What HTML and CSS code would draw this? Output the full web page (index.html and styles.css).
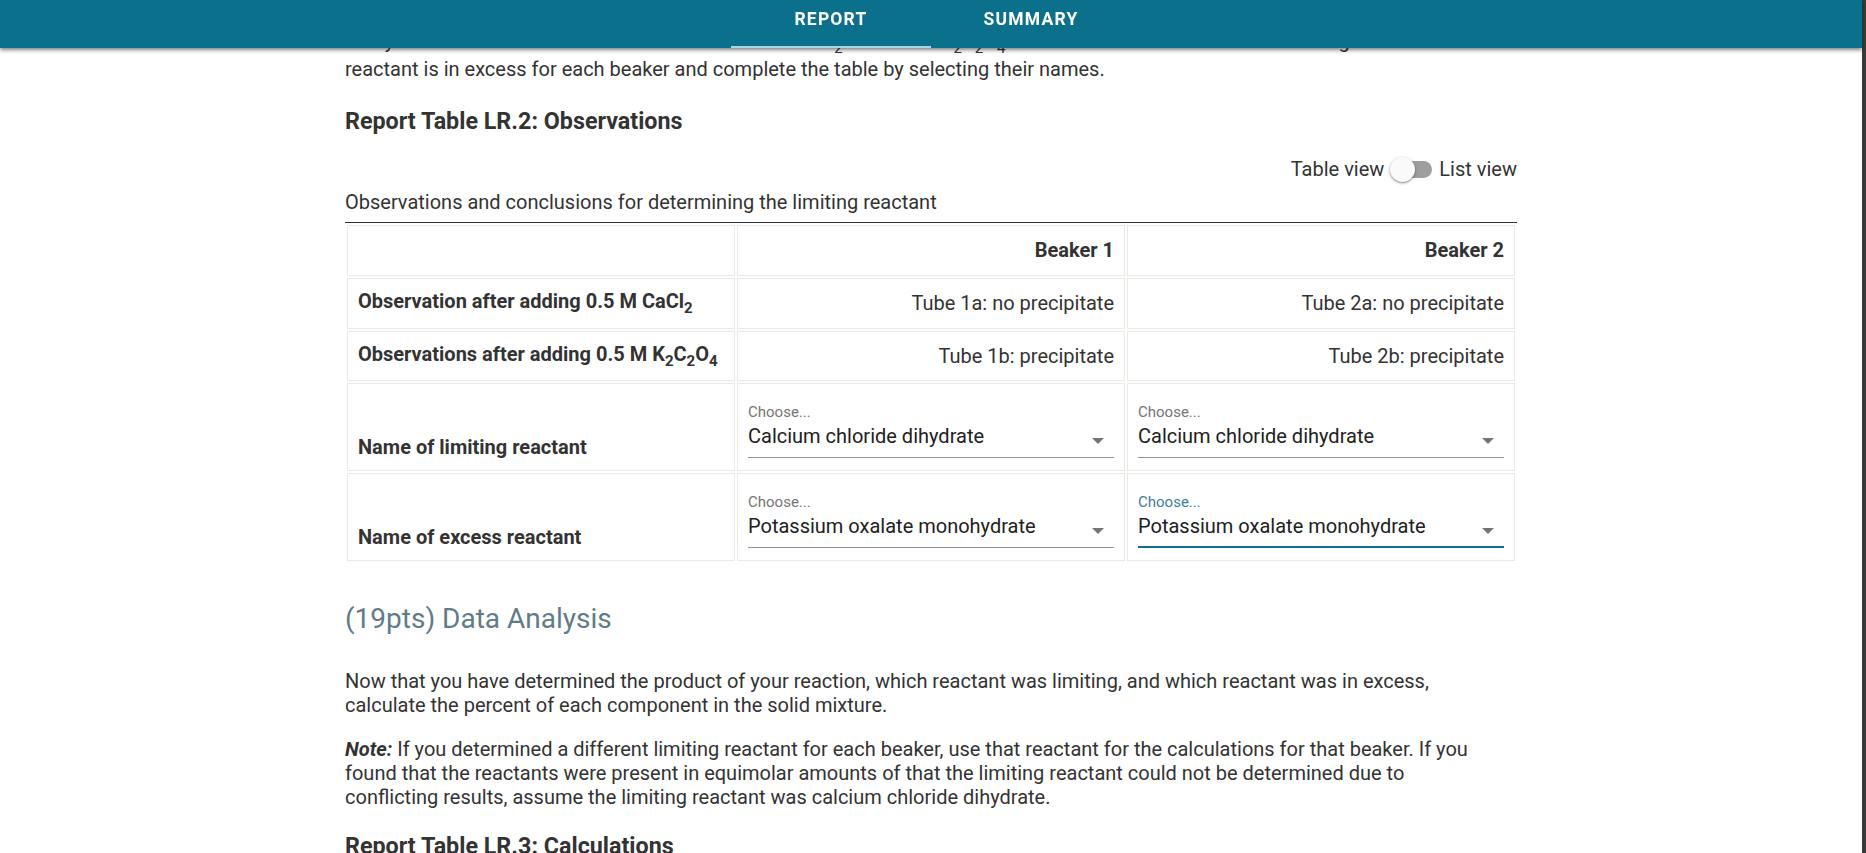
FILE: index.html
```html
<!DOCTYPE html>
<html lang="en">
<head>
<meta charset="utf-8">
<title>Report</title>
<link rel="stylesheet" href="styles.css">
</head>
<body>
<header class="topbar">
  <nav class="tabs">
    <div class="tab tab-active">REPORT</div>
    <div class="tab">SUMMARY</div>
  </nav>
</header>
<main class="page">
  <p class="intro">Analyze the results of the two tests with the 0.5 M CaCl<sub>2</sub> and 0.5 M K<sub>2</sub>C<sub>2</sub>O<sub>4</sub> to determine which reactant is limiting and which<br>reactant is in excess for each beaker and complete the table by selecting their names.</p>

  <h2 class="table-title">Report Table LR.2: Observations</h2>

  <div class="view-toggle">
    <span class="toggle-text">Table view</span>
    <span class="switch"><span class="switch-track"></span><span class="switch-thumb"></span></span>
    <span class="toggle-text">List view</span>
  </div>

  <div class="table-caption">Observations and conclusions for determining the limiting reactant</div>

  <table class="obs-table">
    <tbody>
      <tr class="row-head">
        <td class="cell cell-label"></td>
        <td class="cell cell-value cell-strong">Beaker 1</td>
        <td class="cell cell-value cell-strong">Beaker 2</td>
      </tr>
      <tr class="row-obs">
        <td class="cell cell-label">Observation after adding 0.5 M CaCl<sub>2</sub></td>
        <td class="cell cell-value">Tube 1a: no precipitate</td>
        <td class="cell cell-value">Tube 2a: no precipitate</td>
      </tr>
      <tr class="row-obs2">
        <td class="cell cell-label">Observations after adding 0.5 M K<sub>2</sub>C<sub>2</sub>O<sub>4</sub></td>
        <td class="cell cell-value">Tube 1b: precipitate</td>
        <td class="cell cell-value">Tube 2b: precipitate</td>
      </tr>
      <tr class="row-select">
        <td class="cell cell-label cell-bottom">Name of limiting reactant</td>
        <td class="cell cell-select">
          <div class="select">
            <span class="select-label">Choose...</span>
            <div class="select-row">
              <span class="select-value">Calcium chloride dihydrate</span>
              <span class="select-arrow"></span>
            </div>
          </div>
        </td>
        <td class="cell cell-select">
          <div class="select">
            <span class="select-label">Choose...</span>
            <div class="select-row">
              <span class="select-value">Calcium chloride dihydrate</span>
              <span class="select-arrow"></span>
            </div>
          </div>
        </td>
      </tr>
      <tr class="row-select">
        <td class="cell cell-label cell-bottom">Name of excess reactant</td>
        <td class="cell cell-select">
          <div class="select">
            <span class="select-label">Choose...</span>
            <div class="select-row">
              <span class="select-value">Potassium oxalate monohydrate</span>
              <span class="select-arrow"></span>
            </div>
          </div>
        </td>
        <td class="cell cell-select">
          <div class="select select-focused">
            <span class="select-label">Choose...</span>
            <div class="select-row">
              <span class="select-value">Potassium oxalate monohydrate</span>
              <span class="select-arrow"></span>
            </div>
          </div>
        </td>
      </tr>
    </tbody>
  </table>

  <h3 class="section-title">(19pts) Data Analysis</h3>

  <p class="analysis-text">Now that you have determined the product of your reaction, which reactant was limiting, and which reactant was in excess,<br>calculate the percent of each component in the solid mixture.</p>

  <p class="analysis-note"><strong class="note-label">Note:</strong> If you determined a different limiting reactant for each beaker, use that reactant for the calculations for that beaker. If you<br>found that the reactants were present in equimolar amounts of that the limiting reactant could not be determined due to<br>conflicting results, assume the limiting reactant was calcium chloride dihydrate.</p>

  <h2 class="table-title table-title-next">Report Table LR.3: Calculations</h2>
</main>
</body>
</html>
```

FILE: styles.css
```css
html, body {
  margin: 0;
  padding: 0;
}

body {
  font-family: Roboto, "Liberation Sans", Arial, sans-serif;
  font-size: 20px;
  line-height: normal;
  color: #333333;
  background: #ffffff;
  border-right: 4px solid #3a3a3a;
  min-height: 100vh;
  box-sizing: border-box;
  overflow: hidden;
}

/* ---------- top bar ---------- */
.topbar {
  position: fixed;
  top: 0;
  left: 0;
  right: 4px;
  height: 48px;
  background: #0b708c;
  box-shadow: 0 2px 4px rgba(0, 0, 0, 0.5);
  z-index: 10;
}

.tabs {
  display: flex;
  justify-content: center;
  height: 48px;
}

.tab {
  width: 200px;
  height: 48px;
  box-sizing: border-box;
  padding-top: 9px;
  text-align: center;
  font-size: 17.5px;
  line-height: 20px;
  font-weight: 700;
  letter-spacing: 1.2px;
  color: #ffffff;
  border-bottom: 2px solid transparent;
}

.tab-active {
  border-bottom-color: #a3d7e6;
}

/* ---------- page ---------- */
.page {
  width: 1172px;
  margin: 0 auto;
}

.intro {
  margin: 29px 0 0;
}

sub {
  font-size: 75%;
  vertical-align: sub;
}

.table-title {
  margin: 26px 0 0;
  font-size: 23.3px;
  font-weight: 700;
  line-height: normal;
  color: #333333;
}

.table-title-next {
  margin-top: 23px;
}

.view-toggle {
  margin-top: 20px;
  height: 28px;
  display: flex;
  justify-content: flex-end;
  align-items: center;
}

.switch {
  position: relative;
  width: 42px;
  height: 25px;
  margin: 0 7px 0 6px;
}

.switch-track {
  position: absolute;
  left: 2px;
  top: 4px;
  width: 40px;
  height: 17px;
  border-radius: 9px;
  background: #9e9e9e;
}

.switch-thumb {
  position: absolute;
  left: 0;
  top: 0;
  width: 25px;
  height: 25px;
  border-radius: 50%;
  background: #fafafa;
  box-shadow: 0 1px 3px rgba(0, 0, 0, 0.4), 0 1px 1px rgba(0, 0, 0, 0.14);
}

.table-caption {
  margin-top: 7px;
  padding-bottom: 8px;
  border-bottom: 1px solid #333333;
}

/* ---------- table ---------- */
.obs-table {
  width: 100%;
  table-layout: fixed;
  border-collapse: separate;
  border-spacing: 2px;
  margin: 0;
}

.obs-table sub {
  line-height: 0;
}

.cell {
  border: 1px solid #ebe9e4;
  padding: 12px 10px 13px;
  line-height: 24px;
  vertical-align: middle;
}

.row-head .cell,
.row-obs .cell {
  height: 51px;
  box-sizing: border-box;
}

.row-obs .cell-label {
  padding-top: 10px;
  padding-bottom: 15px;
}

.row-obs2 .cell {
  height: 50px;
  box-sizing: border-box;
  padding: 12px 10px;
}

.row-obs2 .cell-label {
  padding-top: 10px;
  padding-bottom: 14px;
}

.cell-label {
  font-weight: 700;
  color: #333333;
  text-align: left;
}

.cell-value {
  text-align: right;
  color: #333333;
}

.cell-strong {
  font-weight: 700;
}

.cell-bottom {
  vertical-align: bottom;
  padding-bottom: 11px;
}

.row-select .cell {
  height: 88px;
  box-sizing: border-box;
}

.cell-select {
  vertical-align: top;
  padding: 10px 10px 12px;
}

/* ---------- select ---------- */
.select {
  height: 64px;
  box-sizing: border-box;
  padding-top: 8.6px;
  border-bottom: 1px solid #949494;
}

.select-label {
  display: block;
  font-size: 15px;
  line-height: 18px;
  color: #757575;
}

.select-row {
  display: flex;
  justify-content: space-between;
  align-items: flex-start;
  margin-top: 3.6px;
}

.select-value {
  font-size: 20px;
  line-height: 24px;
  color: #212121;
}

.select-arrow {
  width: 0;
  height: 0;
  margin: 14px 10px 0 0;
  border-left: 6px solid transparent;
  border-right: 6px solid transparent;
  border-top: 6px solid #757575;
}

.select-focused {
  border-bottom: 2px solid #0b708c;
}

.select-focused .select-label {
  color: #3a8399;
}

/* ---------- analysis ---------- */
.section-title {
  margin: 39px 0 0;
  font-size: 28px;
  font-weight: 400;
  line-height: normal;
  color: #5f7c88;
}

.analysis-text {
  margin: 34px 0 0;
}

.analysis-note {
  margin: 20px 0 0;
}

.note-label {
  font-style: italic;
  font-weight: 700;
}
```
